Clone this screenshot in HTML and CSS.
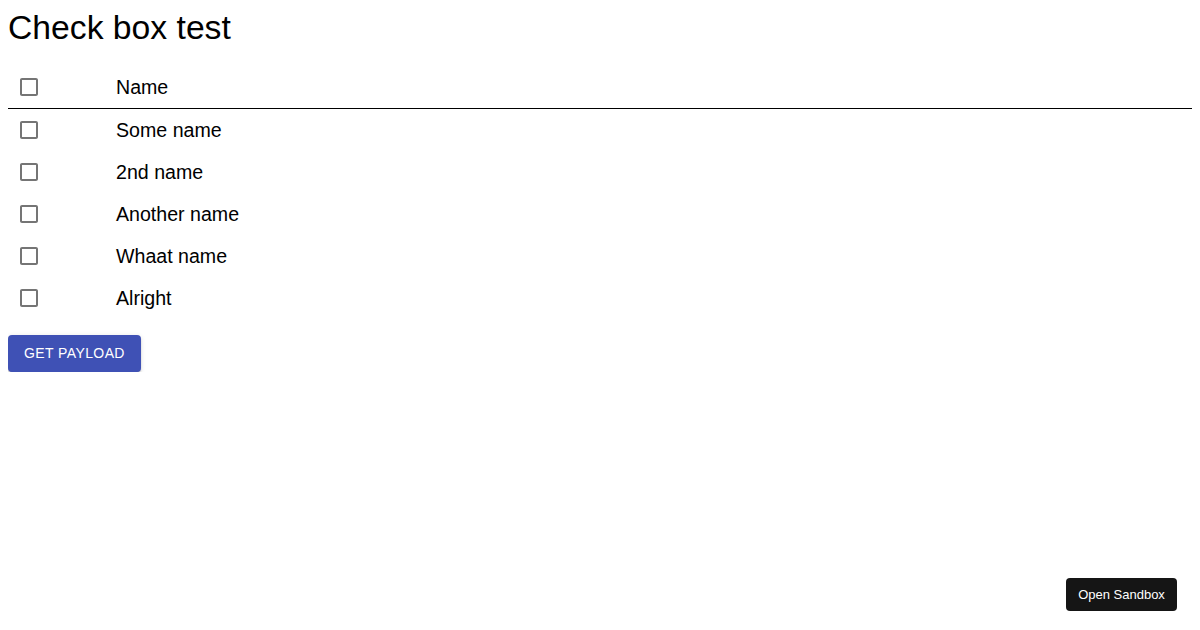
FILE: index.html
```html
<!DOCTYPE html>
<html>
<head>
<meta charset="utf-8">
<link rel="stylesheet" href="styles.css">
</head>
<body>
<h4 class="title">Check box test</h4>
<div class="table">
  <div class="row head">
    <span class="cb"><svg viewBox="0 0 24 24"><path d="M19 5v14H5V5h14m0-2H5c-1.11 0-2 .9-2 2v14c0 1.1.89 2 2 2h14c1.1 0 2-.9 2-2V5c0-1.1-.9-2-2-2z"/></svg></span>
    <span class="cell">Name</span>
  </div>
  <div class="row">
    <span class="cb"><svg viewBox="0 0 24 24"><path d="M19 5v14H5V5h14m0-2H5c-1.11 0-2 .9-2 2v14c0 1.1.89 2 2 2h14c1.1 0 2-.9 2-2V5c0-1.1-.9-2-2-2z"/></svg></span>
    <span class="cell">Some name</span>
  </div>
  <div class="row">
    <span class="cb"><svg viewBox="0 0 24 24"><path d="M19 5v14H5V5h14m0-2H5c-1.11 0-2 .9-2 2v14c0 1.1.89 2 2 2h14c1.1 0 2-.9 2-2V5c0-1.1-.9-2-2-2z"/></svg></span>
    <span class="cell">2nd name</span>
  </div>
  <div class="row">
    <span class="cb"><svg viewBox="0 0 24 24"><path d="M19 5v14H5V5h14m0-2H5c-1.11 0-2 .9-2 2v14c0 1.1.89 2 2 2h14c1.1 0 2-.9 2-2V5c0-1.1-.9-2-2-2z"/></svg></span>
    <span class="cell">Another name</span>
  </div>
  <div class="row">
    <span class="cb"><svg viewBox="0 0 24 24"><path d="M19 5v14H5V5h14m0-2H5c-1.11 0-2 .9-2 2v14c0 1.1.89 2 2 2h14c1.1 0 2-.9 2-2V5c0-1.1-.9-2-2-2z"/></svg></span>
    <span class="cell">Whaat name</span>
  </div>
  <div class="row">
    <span class="cb"><svg viewBox="0 0 24 24"><path d="M19 5v14H5V5h14m0-2H5c-1.11 0-2 .9-2 2v14c0 1.1.89 2 2 2h14c1.1 0 2-.9 2-2V5c0-1.1-.9-2-2-2z"/></svg></span>
    <span class="cell">Alright</span>
  </div>
</div>
<button class="btn">Get Payload</button>
<a class="sandbox">Open Sandbox</a>
</body>
</html>
```

FILE: styles.css
```css
body {
  margin: 8px;
  font-family: "Liberation Sans", Arial, sans-serif;
  color: #000;
  background: #fff;
}
.title {
  margin: 0 0 19px 0;
  font-size: 33.7px;
  font-weight: 400;
  line-height: 39px;
}
.table {
  display: flex;
  flex-direction: column;
}
.row {
  display: grid;
  grid-template-columns: 108px 1fr;
  align-items: center;
  height: 42px;
}
.row.head {
  border-bottom: 1px solid #000;
}
.cb {
  display: block;
  width: 24px;
  height: 24px;
  padding: 9px;
}
.cb svg {
  display: block;
  width: 24px;
  height: 24px;
  fill: rgba(0, 0, 0, 0.54);
}
.cell {
  font-size: 19.6px;
  line-height: normal;
}
.btn {
  margin-top: 16px;
  display: block;
  padding: 6px 16px;
  border: 0;
  border-radius: 4px;
  background: #3f51b5;
  color: #fff;
  font-family: "Liberation Sans", Arial, sans-serif;
  font-size: 14px;
  font-weight: 400;
  line-height: 1.75;
  letter-spacing: 0.02857em;
  text-transform: uppercase;
  box-shadow: 0px 3px 1px -2px rgba(0,0,0,0.2), 0px 2px 2px 0px rgba(0,0,0,0.14), 0px 1px 5px 0px rgba(0,0,0,0.12);
}
.sandbox {
  position: fixed;
  right: 23px;
  bottom: 19px;
  width: 111px;
  height: 33px;
  box-sizing: border-box;
  display: flex;
  align-items: center;
  justify-content: center;
  background: #151515;
  color: #fff;
  border-radius: 4px;
  font-family: "Liberation Sans", Arial, sans-serif;
  font-size: 13px;
}
```
